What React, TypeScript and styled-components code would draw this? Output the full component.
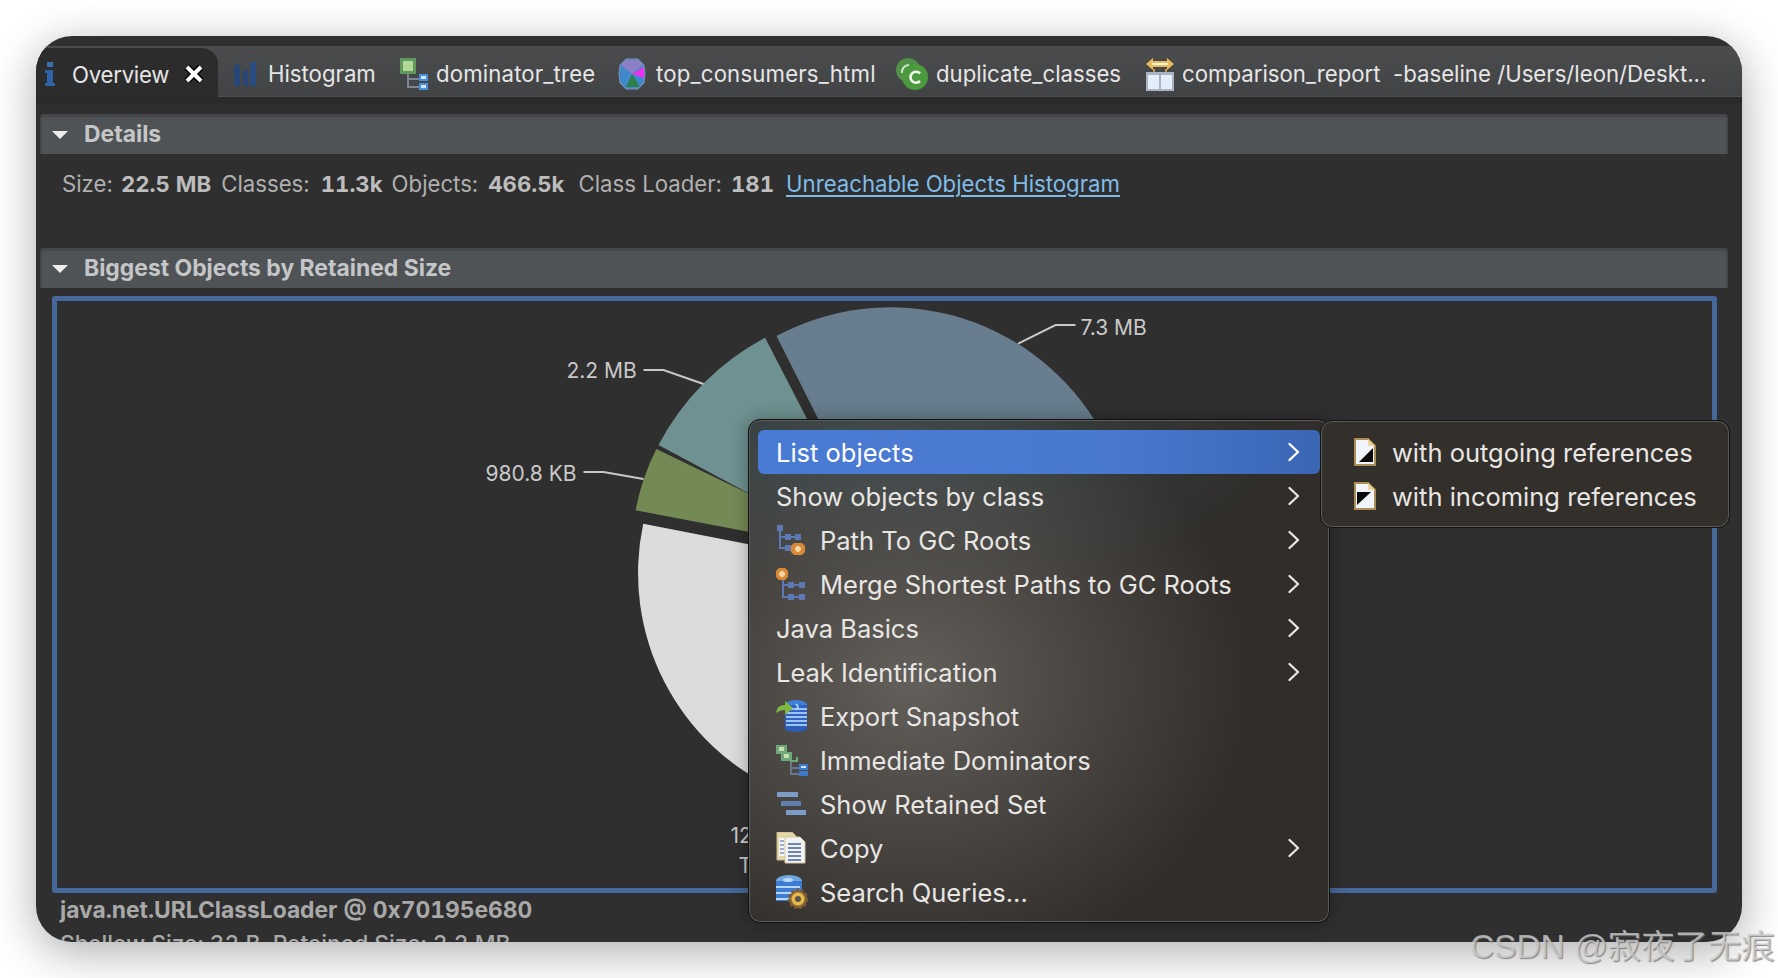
import React from 'react';
import styled, { createGlobalStyle } from 'styled-components';

const GlobalStyle = createGlobalStyle`
  html, body { margin: 0; padding: 0; background: #fff; }
  body { width: 1778px; height: 978px; overflow: hidden; font-family: Inter, "Noto Sans", sans-serif; }
`;

const Page = styled.div`
  position: relative;
  width: 1778px;
  height: 978px;
  padding: 36px 0 0 36px;
  box-sizing: border-box;
`;

const Window = styled.div`
  position: relative;
  width: 1706px;
  height: 906px;
  display: flex;
  flex-direction: column;
  background: #2f2f2f;
  border-radius: 36px;
  box-shadow: 0 10px 46px rgba(0, 0, 0, 0.33);
`;

const Clip = styled.div`
  flex: 1;
  display: flex;
  flex-direction: column;
  overflow: hidden;
  border-radius: 36px;
  padding-top: 10px;
`;

const TabBar = styled.div`
  height: 51px;
  flex-shrink: 0;
  display: flex;
  align-items: stretch;
  background: linear-gradient(#4b4c4e, #424345);
  border-bottom: 1px solid #4d4e50;
  box-sizing: border-box;
`;

const ActiveTab = styled.div`
  width: 182px;
  margin-top: 2px;
  margin-bottom: -1px;
  display: flex;
  align-items: center;
  background: #2c2c2c;
  border-radius: 0 16px 0 0;
  padding: 3px 0 0 8px;
  box-sizing: border-box;
`;

const Tab = styled.div<{ $width: number; $gap: number }>`
  width: ${(p) => p.$width}px;
  flex-shrink: 0;
  display: flex;
  align-items: center;
  gap: ${(p) => p.$gap}px;
`;

const TabStrip = styled.div`
  display: flex;
  padding: 5px 0 0 16px;
`;

const TabLabel = styled.span<{ $left?: number; $tracking?: number }>`
  font-size: 22.2px;
  color: #e6e6e6;
  white-space: pre;
  margin-left: ${(p) => p.$left ?? 0}px;
  letter-spacing: ${(p) => p.$tracking ?? 0}px;
`;

const Divider = styled.div`
  height: 7px;
  flex-shrink: 0;
  background: #2a2a2a;
`;

const Body = styled.div`
  flex: 1;
  display: flex;
  flex-direction: column;
  padding: 10px 14px 0 4px;
`;

const SectionHeader = styled.div`
  height: 40px;
  flex-shrink: 0;
  display: flex;
  align-items: center;
  gap: 16px;
  padding: 0 0 4px 10px;
  background: #4f5356;
  border: solid #454749;
  border-width: 3px 2px 0 2px;
  border-radius: 4px 4px 0 0;
  box-sizing: border-box;
`;

const Caret = styled.span`
  width: 0;
  height: 0;
  border-left: 8px solid transparent;
  border-right: 8px solid transparent;
  border-top: 8px solid #eeeeee;
  margin-top: 3px;
`;

const SectionTitle = styled.span`
  font-size: 22.9px;
  font-weight: 700;
  color: #c4c6c7;
`;

const DetailsBody = styled.div`
  height: 94px;
  flex-shrink: 0;
  box-sizing: border-box;
  padding: 16px 0 0 22px;
  display: flex;
  align-items: flex-start;
  font-size: 22.2px;
  color: #b0b0b0;
  line-height: 28px;
`;

const Value = styled.b<{ $gap: number; $before?: number }>`
  font-weight: 700;
  margin: 0 ${(p) => p.$gap}px 0 ${(p) => p.$before ?? 9}px;
  color: #bdbdbd;
  font-variant-numeric: tabular-nums;
`;

const Link = styled.a`
  color: #7fbcea;
  text-decoration: underline;
  text-underline-offset: 3px;
`;

const Chart = styled.div`
  position: relative;
  flex-shrink: 0;
  height: 597px;
  margin: 8px 11px 0 12px;
  border: 5px solid #46679a;
  border-radius: 3px;
  box-sizing: border-box;
`;

const ChartCanvas = styled.svg`
  display: block;
  width: 100%;
  height: 100%;
`;

const ChartText = styled.text`
  font-family: Inter, sans-serif;
  font-size: 21px;
  fill: #c9c9c9;
`;

const Footer = styled.div`
  padding: 4px 0 0 20px;
  font-size: 22.8px;
  line-height: 26px;
  font-weight: 700;
  color: #a9a9a9;
  white-space: pre;
  font-variant-numeric: tabular-nums;
`;

const FooterSecond = styled.div`
  margin-top: 8px;
  font-weight: 500;
`;

const Menu = styled.div`
  position: absolute;
  left: 712px;
  top: 383px;
  width: 582px;
  height: 504px;
  box-sizing: border-box;
  padding: 10px 9px;
  border-radius: 12px;
  background:
    radial-gradient(ellipse 340px 300px at 28% 52%, rgba(100, 96, 92, 0.98), rgba(100, 96, 92, 0) 100%),
    radial-gradient(ellipse 420px 150px at 20% 5%, rgba(58, 74, 78, 0.95), rgba(58, 74, 78, 0) 100%),
    #302d2a;
  border: 1px solid #0f0f0f;
  box-shadow: inset 0 0 0 1px #5d5c5a, 0 0 18px rgba(0, 0, 0, 0.3);
`;

const Row = styled.div<{ $selected?: boolean }>`
  height: 44px;
  display: flex;
  align-items: center;
  padding: 0 19px 0 18px;
  border-radius: 6px;
  font-size: 25.5px;
  color: ${(p) => (p.$selected ? '#ffffff' : '#e8e6e3')};
  background: ${(p) => (p.$selected ? 'linear-gradient(90deg, #4a7bd4, #4a79d0 60%, #3a66b4)' : 'none')};
`;

const IconSlot = styled.span`
  width: 44px;
  height: 36px;
  flex-shrink: 0;
  display: flex;
  align-items: center;
`;

const RowLabel = styled.span`
  flex: 1;
  white-space: nowrap;
`;

const Submenu = styled.div`
  position: absolute;
  left: 1284px;
  top: 384px;
  width: 410px;
  height: 108px;
  box-sizing: border-box;
  padding: 9px 0;
  border-radius: 12px;
  background: #332f2b;
  border: 1px solid #111;
  box-shadow: inset 0 0 0 1px #5b5a57;
`;

const SubRow = styled.div`
  height: 44px;
  display: flex;
  align-items: center;
  gap: 16px;
  padding-left: 33px;
  font-size: 25.5px;
  color: #e8e6e3;
  white-space: nowrap;
`;

const Watermark = styled.div`
  position: absolute;
  left: 1470px;
  top: 926px;
  font-family: "Liberation Sans", "Noto Sans CJK SC", sans-serif;
  font-size: 33.4px;
  line-height: 42px;
  white-space: nowrap;
  color: rgba(215, 215, 215, 0.72);
  text-shadow: 1px 1px 1px rgba(110, 110, 110, 0.8);
`;

/* --- icons --- */

const InfoIcon = () => (
  <svg width="12" height="24" viewBox="0 0 12 24">
    <rect x="3" y="0" width="6" height="5" fill="#3a6fb5" />
    <path d="M1 8h8v13h2v3H1v-3h2V11H1z" fill="#2f63a8" />
  </svg>
);

const CloseIcon = () => (
  <svg width="22" height="22" viewBox="0 0 22 22" style={{ marginLeft: 14 }}>
    <path d="M4 4L18 18M18 4L4 18" stroke="#000" strokeWidth="7" />
    <path d="M4 4L18 18M18 4L4 18" stroke="#fff" strokeWidth="4" />
  </svg>
);

const HistogramIcon = () => (
  <svg width="22" height="24" viewBox="0 0 22 24">
    <rect x="0" y="3" width="6" height="21" fill="#274677" />
    <rect x="9" y="8" width="5" height="16" fill="#274677" />
    <rect x="16" y="0" width="6" height="24" fill="#2b4c80" />
  </svg>
);

const DominatorIcon = () => (
  <svg width="28" height="32" viewBox="0 0 28 32">
    <rect x="0" y="0" width="16" height="16" fill="#5f9a5c" />
    <rect x="3" y="3" width="10" height="10" fill="#b6d79a" />
    <path d="M8 16v13h11M8 21h11" stroke="#7a8797" strokeWidth="2" fill="none" />
    <rect x="19" y="16" width="9" height="7" fill="#4a8fdd" />
    <rect x="19" y="25" width="9" height="7" fill="#4a8fdd" />
    <rect x="21" y="18" width="5" height="3" fill="#cfe5fb" />
    <rect x="21" y="27" width="5" height="3" fill="#cfe5fb" />
  </svg>
);

const ConsumersIcon = () => (
  <svg width="28" height="32" viewBox="0 0 28 32">
    <path d="M8 1h12l6 6 1 9-1 9-6 6H8l-6-6-1-9 1-9z" fill="#3f88cc" stroke="#7d93b8" strokeWidth="1" />
    <path d="M14 16L3 7l5-5h12l5 5z" fill="#8b80c8" />
    <path d="M14 16l12-7v11z" fill="#ee30f0" />
    <path d="M14 16l8 13H8z" fill="#2f7f4a" />
  </svg>
);

const DuplicateIcon = () => (
  <svg width="32" height="32" viewBox="0 0 32 32">
    <circle cx="12" cy="12" r="12" fill="#4f9147" />
    <circle cx="19" cy="19" r="13" fill="#4c9a3f" />
    <path d="M6 15a7 7 0 0 1 7-8" stroke="#cfe6c8" strokeWidth="2" fill="none" />
    <path d="M24 15.5a5.5 5.5 0 1 0 0 7.5" stroke="#f2f8ee" strokeWidth="2.6" fill="none" />
  </svg>
);

const ComparisonIcon = () => (
  <svg width="30" height="34" viewBox="0 0 30 34">
    <path d="M1 7l7-6v3h14V1l7 6-7 6v-3H8v3z" fill="#e8ba5e" />
    <rect x="7" y="6" width="16" height="2" fill="#fdf3d4" />
    <path d="M9 12v4M21 12v4" stroke="#c79a3c" strokeWidth="2" />
    <rect x="1" y="15" width="28" height="19" fill="#a9b3c4" />
    <rect x="3" y="18" width="11" height="14" fill="#e4eefa" />
    <rect x="16" y="18" width="11" height="14" fill="#e4eefa" />
  </svg>
);

const PathIcon = () => (
  <svg width="30" height="30" viewBox="0 0 30 30">
    <rect x="1" y="0" width="6" height="6" fill="#5c79b4" />
    <path d="M4 6v17h8M4 12h7" stroke="#5c79b4" strokeWidth="2" fill="none" />
    <rect x="9" y="9" width="6" height="6" fill="#5c79b4" />
    <path d="M15 12h4" stroke="#5c79b4" strokeWidth="2" />
    <rect x="19" y="9" width="6" height="6" fill="#5c79b4" />
    <rect x="9" y="20" width="6" height="6" fill="#5c79b4" />
    <path d="M18 18h8l3 3v6l-3 3h-8l-3-3v-6z" fill="#d98a37" />
    <path d="M22 21v6M19 24h6" stroke="#f7d9a8" strokeWidth="3" />
  </svg>
);

const MergeIcon = () => (
  <svg width="30" height="32" viewBox="0 0 30 32">
    <path d="M3 0h6l3 3v6l-3 3H3L0 9V3z" fill="#d98a37" />
    <path d="M6 3v6M3 6h6" stroke="#f7d9a8" strokeWidth="3" />
    <path d="M7 12v17h8M7 17h8" stroke="#5c79b4" strokeWidth="2" fill="none" />
    <rect x="12" y="14" width="6" height="6" fill="#5c79b4" />
    <path d="M18 17h5" stroke="#5c79b4" strokeWidth="2" />
    <rect x="23" y="14" width="6" height="6" fill="#5c79b4" />
    <rect x="12" y="26" width="6" height="6" fill="#5c79b4" />
    <path d="M18 29h5" stroke="#5c79b4" strokeWidth="2" />
    <rect x="23" y="26" width="6" height="6" fill="#5c79b4" />
  </svg>
);

const ExportIcon = () => (
  <svg width="32" height="32" viewBox="0 0 32 32">
    <ellipse cx="20" cy="5" rx="11" ry="5" fill="#3f7fd6" />
    <rect x="9" y="5" width="22" height="24" fill="#2f62c4" />
    <path d="M10 9h21M10 13h21M10 17h21M10 21h21M10 25h21" stroke="#9cc4f3" strokeWidth="1.8" />
    <ellipse cx="20" cy="29" rx="11" ry="3" fill="#2d5cb4" />
    <path d="M20 4c2 2 3 4 0 6" stroke="#a9d0f5" strokeWidth="2" fill="none" />
    <path d="M0 13c1-6 4-8 9-8V1l8 7-8 7v-5c-4 0-6 1-9 3z" fill="#80b83f" />
  </svg>
);

const ImmediateIcon = () => (
  <svg width="32" height="32" viewBox="0 0 32 32">
    <rect x="0" y="1" width="11" height="9" fill="#6fa877" />
    <rect x="3" y="3" width="5" height="4" fill="#c6e0b2" />
    <rect x="5" y="8" width="11" height="9" fill="#6fa877" />
    <rect x="8" y="10" width="5" height="4" fill="#c6e0b2" />
    <path d="M14 17h7v-4" stroke="#6fa877" strokeWidth="2" fill="none" />
    <path d="M15 18v12h8M15 24h8" stroke="#69758c" strokeWidth="2" fill="none" />
    <rect x="23" y="20" width="9" height="6" fill="#3b79cf" />
    <rect x="23" y="27" width="9" height="5" fill="#3b79cf" />
    <rect x="25" y="22" width="5" height="2" fill="#d3e5f8" />
  </svg>
);

const RetainedIcon = () => (
  <svg width="30" height="24" viewBox="0 0 30 24">
    <rect x="1" y="0" width="21" height="5" fill="#7c9bc7" />
    <rect x="5" y="9" width="20" height="5" fill="#5f7fae" />
    <rect x="10" y="18" width="20" height="5" fill="#7c9bc7" />
  </svg>
);

const CopyIcon = () => (
  <svg width="30" height="32" viewBox="0 0 30 32">
    <path d="M1 0h15l4 4v24H1z" fill="#e3d6a9" stroke="#c9b889" />
    <rect x="3" y="6" width="6" height="18" fill="#f4f6fb" />
    <path d="M4 9h4M4 13h4M4 17h4M4 21h4" stroke="#7f93bd" strokeWidth="1.6" />
    <path d="M9 5h15l5 5v21H9z" fill="#f2f3f5" stroke="#d4c89e" />
    <path d="M12 12h13M12 16h13M12 20h13M12 24h13M12 28h13" stroke="#6c85b5" strokeWidth="1.8" />
  </svg>
);

const SearchIcon = () => (
  <svg width="32" height="34" viewBox="0 0 32 34">
    <ellipse cx="13" cy="6" rx="13" ry="6" fill="#6fa8df" />
    <rect x="0" y="6" width="26" height="20" fill="#3d7cd4" />
    <path d="M0 12h24M0 18h18M0 24h14" stroke="#b7d6f5" strokeWidth="2" />
    <ellipse cx="12" cy="5" rx="5" ry="2" fill="#bcd8f2" />
    <circle cx="22" cy="24" r="9" fill="#8a6a3a" stroke="#7b5a33" strokeWidth="2.5" strokeDasharray="3 2" />
    <circle cx="22" cy="24" r="6.5" fill="#e6b948" />
    <circle cx="22" cy="24" r="3" fill="#5a5552" />
  </svg>
);

const PageIcon = ({ incoming }: { incoming?: boolean }) => (
  <svg width="22" height="28" viewBox="0 0 22 28">
    <path d="M1 1h13l7 7v19H1z" fill="#f2f4fb" stroke="#a98f56" strokeWidth="2" />
    <path d="M14 1v7h7z" fill="#e7d6a3" />
    {incoming ? <path d="M3 10h14L3 23z" fill="#0b0b0b" /> : <path d="M19 10v14H5z" fill="#0b0b0b" />}
  </svg>
);

const Chevron = () => (
  <svg width="14" height="20" viewBox="0 0 14 20">
    <path d="M2.5 2L11 10L2.5 18" stroke="currentColor" strokeWidth="2.4" fill="none" strokeLinecap="round" strokeLinejoin="round" />
  </svg>
);

const menuItems: { label: string; icon?: React.ComponentType; sub?: boolean }[] = [
  { label: 'List objects', sub: true },
  { label: 'Show objects by class', sub: true },
  { label: 'Path To GC Roots', icon: PathIcon, sub: true },
  { label: 'Merge Shortest Paths to GC Roots', icon: MergeIcon, sub: true },
  { label: 'Java Basics', sub: true },
  { label: 'Leak Identification', sub: true },
  { label: 'Export Snapshot', icon: ExportIcon },
  { label: 'Immediate Dominators', icon: ImmediateIcon },
  { label: 'Show Retained Set', icon: RetainedIcon },
  { label: 'Copy', icon: CopyIcon, sub: true },
  { label: 'Search Queries...', icon: SearchIcon },
];

const App: React.FC = () => {
  return (
    <Page>
      <GlobalStyle />
      <Window>
        <Clip>
          <TabBar>
            <ActiveTab>
              <InfoIcon />
              <TabLabel $left={16} $tracking={-0.25}>Overview</TabLabel>
              <CloseIcon />
            </ActiveTab>
            <TabStrip>
              <Tab $width={166} $gap={12}>
                <HistogramIcon />
                <TabLabel>Histogram</TabLabel>
              </Tab>
              <Tab $width={218} $gap={8}>
                <DominatorIcon />
                <TabLabel $tracking={0.15}>dominator_tree</TabLabel>
              </Tab>
              <Tab $width={278} $gap={10}>
                <ConsumersIcon />
                <TabLabel $tracking={0.18}>top_consumers_html</TabLabel>
              </Tab>
              <Tab $width={249} $gap={8}>
                <DuplicateIcon />
                <TabLabel>duplicate_classes</TabLabel>
              </Tab>
              <Tab $width={570} $gap={7}>
                <ComparisonIcon />
                <TabLabel>comparison_report  -baseline /Users/leon/Deskt...</TabLabel>
              </Tab>
            </TabStrip>
          </TabBar>
          <Divider />
          <Body>
            <SectionHeader>
              <Caret />
              <SectionTitle>Details</SectionTitle>
            </SectionHeader>
            <DetailsBody>
              Size:<Value $before={8} $gap={10}>22.5 MB</Value>Classes:<Value $before={11} $gap={9}>11.3k</Value>Objects:
              <Value $before={10} $gap={14}>466.5k</Value>Class Loader:<Value $before={9} $gap={12}>181</Value>
              <Link>Unreachable Objects Histogram</Link>
            </DetailsBody>
            <SectionHeader>
              <Caret />
              <SectionTitle>Biggest Objects by Retained Size</SectionTitle>
            </SectionHeader>
            <Chart>
              <ChartCanvas viewBox="57 300 1654 587">
                <path d="M883 548L776 335A241 241 0 0 1 1094 419L1094 460Z" fill="#687e8e" />
                <path d="M882 564L764.6 336.7A255 255 0 0 0 658 444Z" fill="#6f9191" />
                <path d="M880 556L655.8 448A240 240 0 0 0 635 509.3Z" fill="#748a55" />
                <path d="M880 569L642.7 522.7A238 238 0 0 0 780 790L880 790Z" fill="#dcdcdc" />
                <path d="M1017.6 342.7L1055 324H1075" stroke="#c9c9c9" strokeWidth="2" fill="none" />
                <path d="M643 369H663L703 383" stroke="#c9c9c9" strokeWidth="2" fill="none" />
                <path d="M583 471H603L643 478" stroke="#c9c9c9" strokeWidth="2" fill="none" />
                <ChartText x="1080" y="334">7.3 MB</ChartText>
                <ChartText x="566" y="377">2.2 MB</ChartText>
                <ChartText x="485" y="480">980.8 KB</ChartText>
                <ChartText x="730" y="842">12.1 MB</ChartText>
                <ChartText x="738" y="872">Total: 22.5 MB</ChartText>
              </ChartCanvas>
            </Chart>
            <Footer>
              java.net.URLClassLoader @ 0x70195e680
              <FooterSecond>Shallow Size: 32 B  Retained Size: 2.2 MB</FooterSecond>
            </Footer>
          </Body>
        </Clip>
        <Menu>
          {menuItems.map((item, index) => (
            <Row key={item.label} $selected={index === 0}>
              {item.icon && (
                <IconSlot>
                  <item.icon />
                </IconSlot>
              )}
              <RowLabel>{item.label}</RowLabel>
              {item.sub && <Chevron />}
            </Row>
          ))}
        </Menu>
        <Submenu>
          <SubRow>
            <PageIcon />
            with outgoing references
          </SubRow>
          <SubRow>
            <PageIcon incoming />
            with incoming references
          </SubRow>
        </Submenu>
      </Window>
      <Watermark>CSDN @寂夜了无痕</Watermark>
    </Page>
  );
};

export default App;
